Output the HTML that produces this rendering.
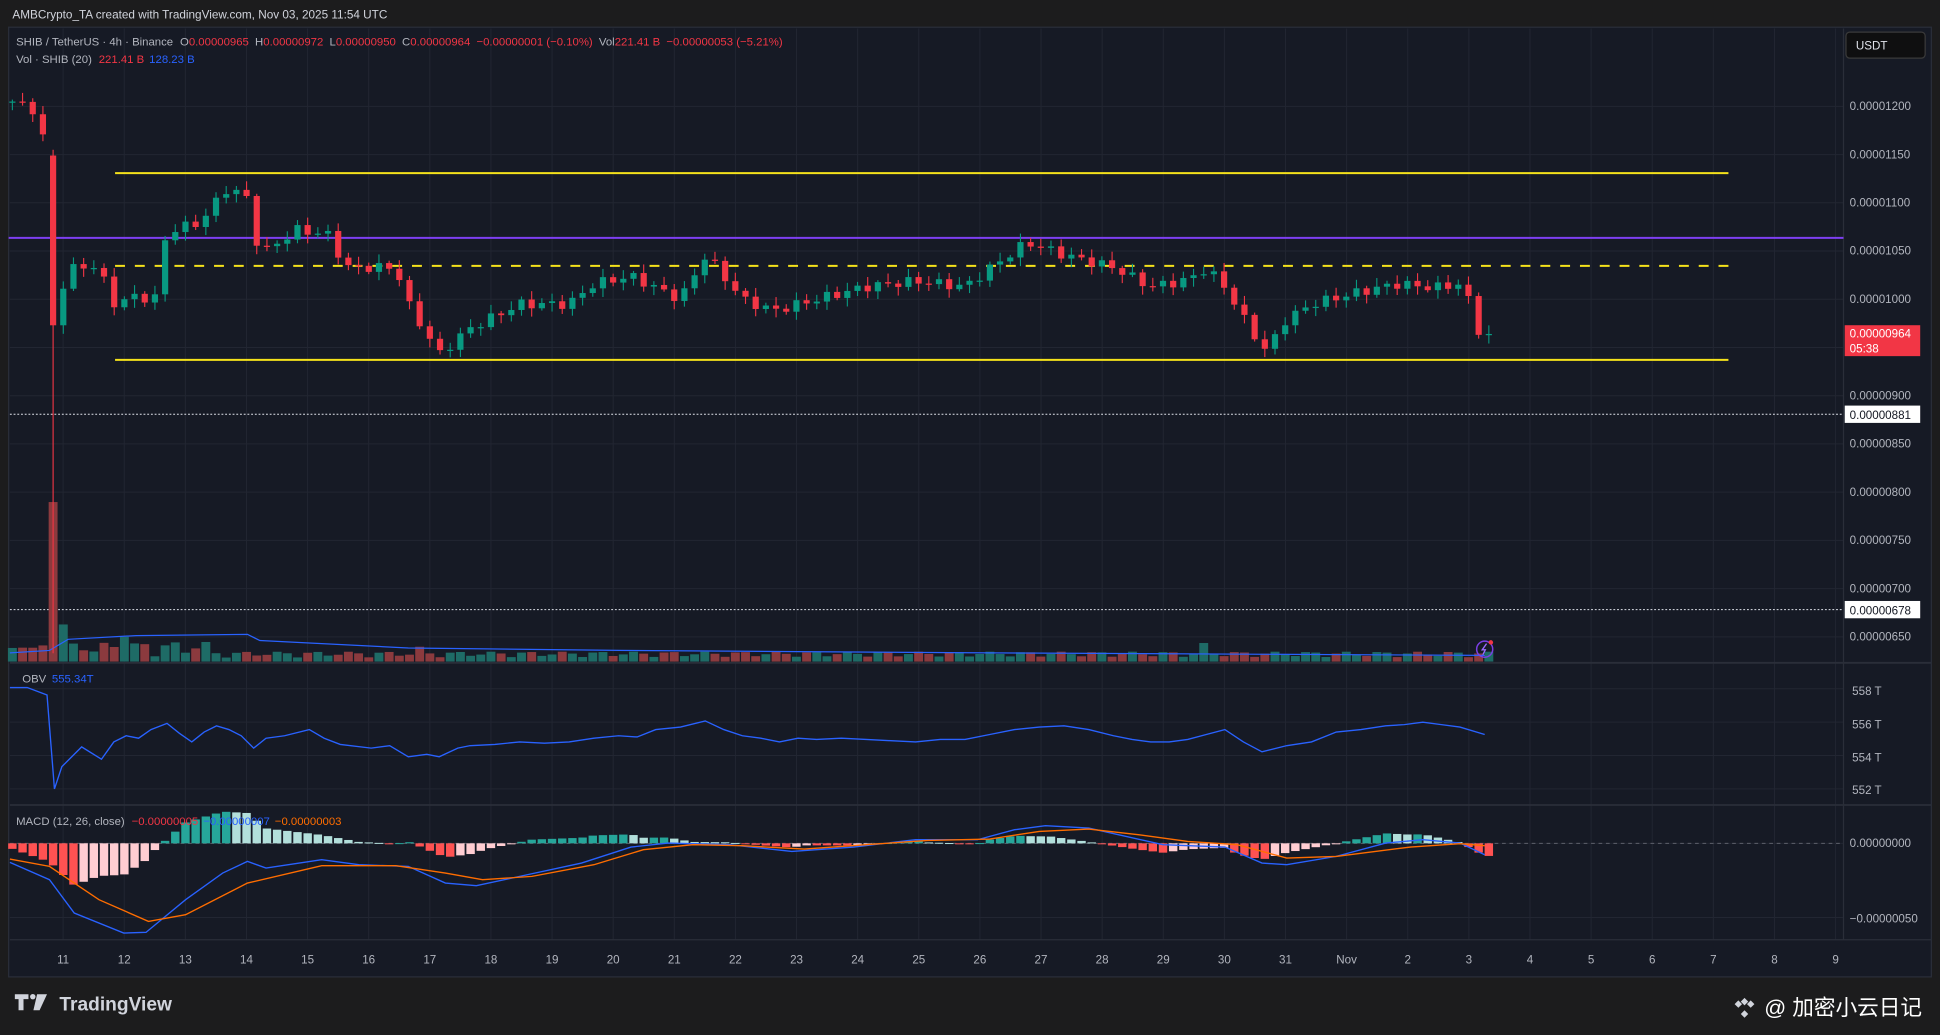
<!DOCTYPE html>
<html><head><meta charset="utf-8"><style>
html,body{margin:0;padding:0;background:#1c1c1d;width:1940px;height:1035px;overflow:hidden}
svg{display:block}
text{font-family:"Liberation Sans","Noto Sans CJK SC",sans-serif}
</style></head><body>
<svg id="s" width="1940" height="1035" viewBox="0 0 1568 837" preserveAspectRatio="none" xmlns="http://www.w3.org/2000/svg">
<rect x="0" y="0" width="1568" height="837" fill="#1c1c1d"/>
<rect x="7" y="22" width="1554" height="768" fill="#161a25" stroke="#2a2e39" stroke-width="1"/>
<g id="grid"></g>
<g id="lines"></g>
<g id="dyn"></g>
<g font-size="9.4" fill="#b2b5be">
<text x="1495" y="89">0.00001200</text>
<text x="1495" y="128">0.00001150</text>
<text x="1495" y="167">0.00001100</text>
<text x="1495" y="206">0.00001050</text>
<text x="1495" y="245">0.00001000</text>
<text x="1495" y="323">0.00000900</text>
<text x="1495" y="362">0.00000850</text>
<text x="1495" y="401">0.00000800</text>
<text x="1495" y="440">0.00000750</text>
<text x="1495" y="479">0.00000700</text>
<text x="1495" y="518">0.00000650</text>
<text x="1497" y="562">558 T</text>
<text x="1497" y="589">556 T</text>
<text x="1497" y="616">554 T</text>
<text x="1497" y="642">552 T</text>
<text x="1495" y="685">0.00000000</text>
<text x="1495" y="746">−0.00000050</text>
</g>
<rect x="1492" y="26" width="64" height="21" rx="3" fill="#0f0f10" stroke="#3a3a3a"/>
<text x="1500" y="40" font-size="9.4" fill="#e0e3eb">USDT</text>
<rect x="1491" y="263" width="61" height="25" fill="#f23645"/>
<text x="1495" y="273" font-size="9.4" fill="#fff">0.00000964</text>
<text x="1495" y="285" font-size="9.4" fill="#fff">05:38</text>
<rect x="1491" y="328" width="61" height="14" fill="#fff"/>
<text x="1495" y="339" font-size="9.4" fill="#131722">0.00000881</text>
<rect x="1491" y="486" width="61" height="14" fill="#fff"/>
<text x="1495" y="497" font-size="9.4" fill="#131722">0.00000678</text>
<text x="10" y="15" font-size="9.5" fill="#d1d4dc">AMBCrypto_TA created with TradingView.com, Nov 03, 2025 11:54 UTC</text>
<text x="13" y="37" font-size="9.2" fill="#b2b5be">SHIB / TetherUS · 4h · Binance <tspan dx="3">O</tspan><tspan fill="#f23645">0.00000965</tspan><tspan dx="5">H</tspan><tspan fill="#f23645">0.00000972</tspan><tspan dx="5">L</tspan><tspan fill="#f23645">0.00000950</tspan><tspan dx="5">C</tspan><tspan fill="#f23645">0.00000964</tspan><tspan dx="5" fill="#f23645">−0.00000001 (−0.10%)</tspan><tspan dx="5">Vol</tspan><tspan fill="#f23645">221.41 B</tspan><tspan dx="5" fill="#f23645">−0.00000053 (−5.21%)</tspan></text>
<text x="13" y="51" font-size="9.2" fill="#b2b5be">Vol · SHIB (20) <tspan dx="3" fill="#f23645">221.41 B</tspan><tspan dx="4" fill="#2962ff">128.23 B</tspan></text>
<text x="18" y="552" font-size="9.2" fill="#b2b5be">OBV <tspan dx="2" fill="#2962ff">555.34T</tspan></text>
<text x="13" y="667" font-size="9.2" fill="#b2b5be">MACD (12, 26, close) <tspan dx="3" fill="#f23645">−0.00000005</tspan><tspan dx="4" fill="#2962ff">−0.00000007</tspan><tspan dx="4" fill="#ff6d00">−0.00000003</tspan></text>
<g id="days" font-size="9.4" fill="#b2b5be" text-anchor="middle"></g>
<circle cx="1200" cy="525" r="6.5" fill="none" stroke="#7b3fe4" stroke-width="1.2"/>
<path d="M1201.5 520.5 L1198 525.5 L1200.5 525.5 L1198.5 529.5" fill="none" stroke="#9b6bff" stroke-width="1.1"/>
<circle cx="1205" cy="519.5" r="1.8" fill="#f23645"/>
<g fill="#d1d4dc">
<path d="M12 804 h11 v4 h-4 v9 h-4 v-9 h-3 z"/>
<circle cx="26.5" cy="806" r="2.2"/>
<path d="M30 804 h8 l-6 13 h-5 z"/>
</g>
<text x="48" y="817" font-size="15.5" font-weight="bold" fill="#d1d4dc">TradingView</text>
<g fill="#d1d4dc" transform="translate(1410,815)">
<path d="M0 -8 l3 3 l-3 3 l-3 -3 z"/><path d="M0 2 l3 3 l-3 3 l-3 -3 z"/><path d="M-5 -3 l3 3 l-3 3 l-3 -3 z" transform="translate(0,-3)"/><path d="M5 -3 l3 3 l-3 3 l-3 -3 z" transform="translate(0,-3)"/>
</g>
<text x="1426" y="821" font-size="17.5" fill="#ffffff">@ 加密小云日记</text>
</svg>
<script>
(function(){
function Y(p){return 86+(1200-p)*0.78;}
function lerp(pts,x){if(x<=pts[0][0])return pts[0][1];for(var i=1;i<pts.length;i++){if(x<=pts[i][0]){var a=pts[i-1],b=pts[i];return a[1]+(b[1]-a[1])*(x-a[0])/(b[0]-a[0]);}}return pts[pts.length-1][1];}
var g="";
var hp=[1200,1150,1100,1050,1000,950,900,850,800,750,700,650];
hp.forEach(function(p){g+='<line x1="8" x2="1490" y1="'+Y(p)+'" y2="'+Y(p)+'" stroke="#222632" stroke-width="0.8"/>';});
[557,584,611,638,682,742].forEach(function(y){g+='<line x1="8" x2="1490" y1="'+y+'" y2="'+y+'" stroke="#222632" stroke-width="0.8"/>';});
var days=["11","12","13","14","15","16","17","18","19","20","21","22","23","24","25","26","27","28","29","30","31","Nov","2","3","4","5","6","7","8","9"];
var dh="";
for(var i=0;i<days.length;i++){var x=51+i*49.4;g+='<line x1="'+x+'" x2="'+x+'" y1="23" y2="760" stroke="#222632" stroke-width="0.8"/>';dh+='<text x="'+x+'" y="779">'+days[i]+'</text>';}
g+='<line x1="1490" x2="1490" y1="23" y2="760" stroke="#2a2e39"/>';
g+='<line x1="8" x2="1561" y1="536" y2="536" stroke="#2a2e39" stroke-width="1.5"/>';
g+='<line x1="8" x2="1561" y1="651" y2="651" stroke="#2a2e39" stroke-width="1.5"/>';
g+='<line x1="8" x2="1561" y1="760" y2="760" stroke="#2a2e39"/>';
document.getElementById("grid").innerHTML=g;
document.getElementById("days").innerHTML=dh;
var path=[[10,1205],[30,1195],[38,1149],[44,1149],[45,973],[50,1013],[60,1033],[80,1035],[90,995],[110,1003],[125,1000],[135,1072],[160,1078],[185,1117],[200,1104],[210,1046],[240,1072],[265,1067],[280,1033],[320,1033],[330,995],[355,943],[380,970],[420,995],[460,995],[480,1016],[510,1024],[550,1000],[570,1045],[580,1032],[600,1000],[625,988],[660,1000],[700,1013],[740,1019],[780,1013],[800,1032],[830,1059],[860,1046],[900,1033],[930,1013],[960,1020],[975,1032],[990,1013],[1010,970],[1025,943],[1035,975],[1060,995],[1100,1008],[1130,1016],[1160,1012],[1185,1017],[1190,970],[1205,964]];
var c="",v="",prev=1205,N=146;
for(var k=0;k<N;k++){
 var x=10+k*8.23;
 var cl=lerp(path,x)+Math.sin(k*2.3)*5;
 if(k==N-1)cl=964;
 var op=prev;
 if(k==4){op=1149;cl=973;}
 var up=cl>=op,col=up?"#089981":"#f23645";
 var hi=Math.max(op,cl)+2+Math.abs(Math.sin(k*1.7))*7,lo=Math.min(op,cl)-2-Math.abs(Math.cos(k*1.3))*7;
 if(k==4){hi=1155;lo=633;}
 c+='<line x1="'+x+'" x2="'+x+'" y1="'+Y(hi)+'" y2="'+Y(lo)+'" stroke="'+col+'" stroke-width="0.9"/>';
 var yt=Y(Math.max(op,cl)),hb=Math.max(1,Y(Math.min(op,cl))-yt);
 c+='<rect x="'+(x-2.5)+'" y="'+yt+'" width="5" height="'+hb+'" fill="'+col+'"/>';
 var vh=3+Math.abs(Math.sin(k*0.9))*5+(k<20?8*Math.abs(Math.cos(k)):0);
 if(k==4)vh=129;if(k==5)vh=30;if(k==11)vh=20;if(k==117)vh=15;if(k==40)vh=12;
 v+='<rect x="'+(x-3.6)+'" y="'+(535-vh)+'" width="7.2" height="'+vh+'" fill="'+(up?"#1e6b66":"#8b3a3e")+'"/>';
 prev=cl;
}
var L="";
L+='<line x1="93" x2="1397" y1="140" y2="140" stroke="#f5e21b" stroke-width="1.6"/>';
L+='<line x1="7" x2="1490" y1="192.4" y2="192.4" stroke="#7e3ff2" stroke-width="1.6"/>';
L+='<line x1="93" x2="1397" y1="215" y2="215" stroke="#f5e21b" stroke-width="1.6" stroke-dasharray="8,8"/>';
L+='<line x1="93" x2="1397" y1="291" y2="291" stroke="#f5e21b" stroke-width="1.6"/>';
L+='<line x1="8" x2="1490" y1="335" y2="335" stroke="#e0e3eb" stroke-width="0.9" stroke-dasharray="1.5,1.5"/>';
L+='<line x1="8" x2="1490" y1="493" y2="493" stroke="#e0e3eb" stroke-width="0.9" stroke-dasharray="1.5,1.5"/>';
L+='<line x1="8" x2="1490" y1="682" y2="682" stroke="#5d606b" stroke-width="0.8" stroke-dasharray="3,3"/>';
document.getElementById("lines").innerHTML=L;
var vm=[[8,528],[40,526],[55,517],[110,514],[200,513],[210,518],[250,520],[330,524],[500,526],[800,528],[1200,530]];
function pl(pts,col,w){return '<polyline points="'+pts.map(function(p){return p[0]+","+p[1]}).join(" ")+'" fill="none" stroke="'+col+'" stroke-width="'+w+'"/>';}
var obv=[[8,556],[22,556],[38,562],[44,638],[50,620],[58,612],[66,604],[82,614],[92,600],[102,595],[112,597],[122,590],[135,585],[145,593],[155,600],[165,592],[175,587],[185,590],[195,595],[205,605],[215,597],[230,595],[250,590],[262,597],[275,602],[300,605],[315,603],[330,612],[345,610],[355,612],[370,605],[380,603],[400,602],[420,600],[440,601],[460,600],[480,597],[500,595],[515,596],[530,590],[550,588],[570,583],[585,590],[600,595],[615,597],[630,600],[645,597],[660,598],[680,597],[700,598],[720,599],[740,600],[760,598],[780,598],[800,594],[820,590],[840,588],[860,587],[880,590],[900,595],[915,598],[930,600],[945,600],[960,598],[975,594],[990,590],[1005,600],[1020,608],[1040,603],[1060,600],[1070,596],[1080,592],[1100,590],[1120,587],[1135,586],[1150,584],[1165,586],[1180,588],[1200,594]];
function cv(a){return a.map(function(p){return [p[0],614.4+p[1]*0.2695];});}
var blue=cv([[8,308],[40,360],[60,460],[100,520],[118,518],[150,420],[180,340],[200,305],[215,325],[260,300],[290,315],[330,320],[360,370],[385,378],[420,350],[470,310],[510,262],[540,250],[590,255],[640,275],[690,262],[740,240],[790,240],[820,210],[845,198],[880,205],[940,255],[990,262],[1020,310],[1040,315],[1080,290],[1120,250],[1150,240],[1180,250],[1200,285]]);
var org=cv([[8,298],[40,320],[80,420],[120,485],[150,465],[200,370],[260,318],[320,318],[360,340],[390,360],[430,350],[480,315],[520,270],[560,255],[600,258],[650,268],[700,255],[750,242],[800,238],[840,215],[880,208],[920,225],[960,245],[1000,255],[1040,295],[1080,290],[1140,262],[1180,252],[1200,258]]);
var h="",ph=null;
for(var k=0;k<N;k++){var x=10+k*8.23;var d=(lerp(org,x)-lerp(blue,x))*1.4;
 var col;if(d>=0){col=(ph!==null&&d<ph)?"#b2dfdb":"#26a69a";}else{col=(ph!==null&&d>ph)?"#ffcdd2":"#ff5252";}
 var y0=d>=0?682-d:682,hh=Math.max(0.8,Math.abs(d));
 h+='<rect x="'+(x-3.4)+'" y="'+y0+'" width="6.8" height="'+hh+'" fill="'+col+'"/>';ph=d;}
document.getElementById("dyn").innerHTML=v+pl(vm,"#2962ff",1)+c+pl(obv,"#2962ff",1.1)+h+pl(blue,"#2962ff",1.1)+pl(org,"#ff6d00",1.1);
})();
</script>
</body></html>
